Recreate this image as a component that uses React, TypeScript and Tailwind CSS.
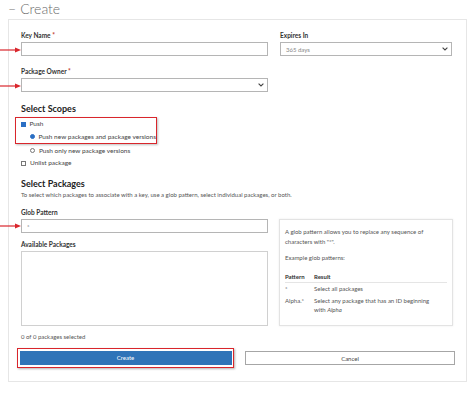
import React from 'react';

const Chevron = () => (
  <svg width="6" height="4" viewBox="0 0 6 4" className="shrink-0">
    <path d="M0.6 0.6 L3 3 L5.4 0.6" fill="none" stroke="#444" strokeWidth="1.1" />
  </svg>
);

const Arrow = ({ top }: { top: number }) => (
  <svg
    width="22"
    height="6"
    viewBox="0 0 22 6"
    className="absolute left-0"
    style={{ top }}
  >
    <line x1="0" y1="3" x2="16" y2="3" stroke="#d9262c" strokeWidth="1.2" />
    <path d="M15 0.6 L21 3 L15 5.4 Z" fill="#d9262c" />
  </svg>
);

const Label = ({ children, req }: { children: React.ReactNode; req?: boolean }) => (
  <div className="h-[10px] mb-[1px] text-[6.5px] leading-[10px] font-bold text-[#333]">
    {children}
    {req && <span className="text-[#c0392b]"> *</span>}
  </div>
);

const Box = ({ children, className = '' }: { children?: React.ReactNode; className?: string }) => (
  <div className={`h-[14px] border border-[#b5b5b5] bg-white flex items-center pl-[5px] pr-[3px] ${className}`}>
    {children}
  </div>
);

const Check = ({ checked }: { checked?: boolean }) => (
  <span
    className={`inline-block w-[5px] h-[5px] mr-[4px] border ${
      checked ? 'bg-[#2b6fc4] border-[#2b6fc4]' : 'bg-white border-[#777]'
    }`}
  />
);

const Radio = ({ checked }: { checked?: boolean }) => (
  <span
    className={`inline-block w-[5px] h-[5px] mr-[4px] rounded-full border ${
      checked ? 'bg-[#2b6fc4] border-[#2b6fc4]' : 'bg-white border-[#777]'
    }`}
  />
);

export default function App() {
  return (
    <div
      className="relative w-[474px] h-[395px] bg-white overflow-hidden text-[#333]"
      style={{ fontFamily: 'Lato, "Noto Sans", sans-serif' }}
    >
      {/* title */}
      <div className="h-[20px] flex items-center pl-[8px] text-[#6b6b6b] font-light text-[14px] leading-[20px] -mt-[1px]">
        <span className="mr-[4px]">–</span>
        <span>Create</span>
      </div>

      {/* panel */}
      <div className="ml-[8px] w-[459px] h-[363px] border border-[#e6e6e6] pt-[11px] pl-[12px] pr-[11px]">
        <div className="grid grid-cols-[247px_172px] gap-x-[12px]">
          <div>
            <Label req>Key Name</Label>
            <Box />
          </div>
          <div>
            <Label>Expires In</Label>
            <Box className="justify-between">
              <span className="text-[6px] text-[#888]">365 days</span>
              <Chevron />
            </Box>
          </div>
        </div>

        <div className="mt-[11px] w-[247px]">
          <Label req>Package Owner</Label>
          <Box className="justify-end">
            <Chevron />
          </Box>
        </div>

        <div className="mt-[11px] h-[12px] text-[9px] leading-[12px] font-bold text-[#222]">Select Scopes</div>
        <div className="mt-[2px] text-[6.5px] text-[#444]">
          <div className="-ml-[6px] w-[142px] border-[1.5px] border-[#d9262c] pl-[4.5px] shadow-[1px_1px_2px_rgba(0,0,0,0.25)]">
            <div className="h-[12.5px] flex items-center">
              <Check checked />
              Push
            </div>
            <div className="h-[12.5px] flex items-center pl-[9px]">
              <Radio checked />
              Push new packages and package versions
            </div>
          </div>
          <div className="h-[13px] flex items-center pl-[9px]">
            <Radio />
            Push only new package versions
          </div>
          <div className="h-[12px] flex items-center">
            <Check />
            Unlist package
          </div>
        </div>

        <div className="mt-[9px] h-[12px] text-[9px] leading-[12px] font-bold text-[#222]">Select Packages</div>
        <div className="h-[10px] text-[6px] leading-[10px] text-[#555]">
          To select which packages to associate with a key, use a glob pattern, select individual packages, or both.
        </div>

        <div className="mt-[8px] grid grid-cols-[247px_174px] gap-x-[11px]">
          <div>
            <Label>Glob Pattern</Label>
            <Box>
              <span className="text-[6px] text-[#666]">*</span>
            </Box>
            <div className="mt-[7px]">
              <Label>Available Packages</Label>
              <div className="h-[75px] border border-[#d0d0d0] bg-white" />
            </div>
          </div>
          <div className="mt-[11px] h-[107px] border border-[#e3e3e3] shadow-[0_0_2px_rgba(0,0,0,0.08)] px-[5px] pt-[7px] text-[6px] leading-[9.5px] text-[#555]">
            <div>A glob pattern allows you to replace any sequence of</div>
            <div>characters with "*".</div>
            <div className="mt-[7px]">Example glob patterns:</div>
            <div className="mt-[9px] flex font-bold text-[#333] border-b border-[#e5e5e5] pb-[1px]">
              <span className="w-[29px]">Pattern</span>
              <span>Result</span>
            </div>
            <div className="flex mt-[1px]">
              <span className="w-[29px]">*</span>
              <span>Select all packages</span>
            </div>
            <div className="flex mt-[2px]">
              <span className="w-[29px] shrink-0">Alpha.*</span>
              <span>
                Select any package that has an ID beginning
                <br />
                with <i>Alpha</i>
              </span>
            </div>
          </div>
        </div>

        <div className="mt-[6px] h-[10px] text-[6px] leading-[10px] text-[#555]">0 of 0 packages selected</div>

        <div className="mt-[9px] flex gap-x-[11px] -ml-[1px]">
          <div className="-m-[3px] p-[1.5px] border-[1.5px] border-[#d9262c] shadow-[1px_1px_2px_rgba(0,0,0,0.3)]">
            <div className="w-[212px] h-[14px] bg-[#2f74b8] flex items-center justify-center text-[6px] text-white">
              Create
            </div>
          </div>
          <div className="ml-[3px] w-[212px] h-[14px] border border-[#a6a6a6] bg-white flex items-center justify-center text-[6px] text-[#444]">
            Cancel
          </div>
        </div>
      </div>

      <Arrow top={47} />
      <Arrow top={83} />
      <Arrow top={223} />
    </div>
  );
}
